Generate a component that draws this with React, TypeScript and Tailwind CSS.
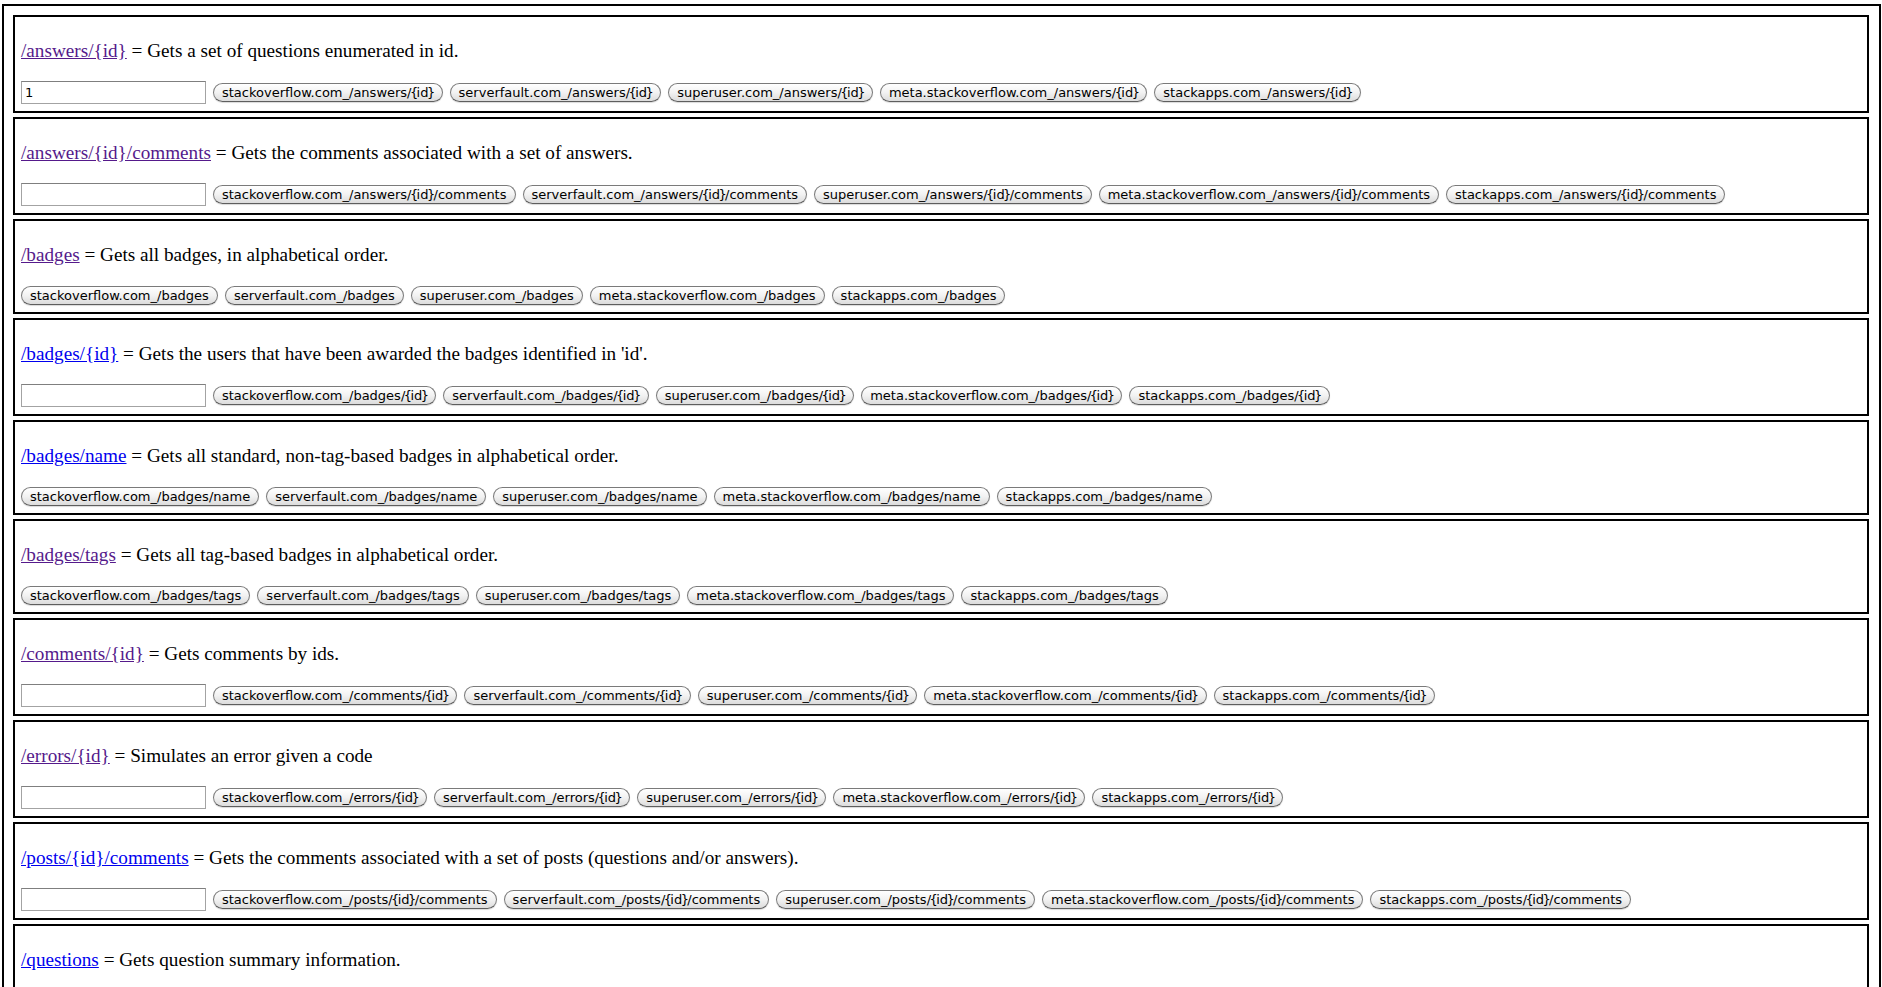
import React from "react";

type Route = { path: string; desc: string; input: boolean; value?: string; visited: boolean };

const routes: Route[] = [
  { path: "/answers/{id}", desc: "Gets a set of questions enumerated in id.", input: true, value: "1", visited: true },
  { path: "/answers/{id}/comments", desc: "Gets the comments associated with a set of answers.", input: true, visited: true },
  { path: "/badges", desc: "Gets all badges, in alphabetical order.", input: false, visited: true },
  { path: "/badges/{id}", desc: "Gets the users that have been awarded the badges identified in 'id'.", input: true, visited: false },
  { path: "/badges/name", desc: "Gets all standard, non-tag-based badges in alphabetical order.", input: false, visited: false },
  { path: "/badges/tags", desc: "Gets all tag-based badges in alphabetical order.", input: false, visited: true },
  { path: "/comments/{id}", desc: "Gets comments by ids.", input: true, visited: true },
  { path: "/errors/{id}", desc: "Simulates an error given a code", input: true, visited: true },
  { path: "/posts/{id}/comments", desc: "Gets the comments associated with a set of posts (questions and/or answers).", input: true, visited: false },
  { path: "/questions", desc: "Gets question summary information.", input: false, visited: false },
];

const sites = ["stackoverflow.com", "serverfault.com", "superuser.com", "meta.stackoverflow.com", "stackapps.com"];

function Label({ text }: { text: string }) {
  const parts = text.split(/([{}])/);
  return (
    <>
      {parts.map((p, i) =>
        p === "{" || p === "}" ? (
          <span key={i} className="mx-[-1.6px]">{p}</span>
        ) : (
          <React.Fragment key={i}>{p}</React.Fragment>
        )
      )}
    </>
  );
}

function Box({ r }: { r: Route }) {
  return (
    <div className="border-2 border-black pt-[24px] pb-[7px] pl-[6px] pr-[6px]">
      <div className="h-[20px] flex items-center whitespace-nowrap text-[19.2px] leading-[20px] text-black" style={{ fontFamily: '"Liberation Serif", "Times New Roman", serif' }}>
        <a href="#" className={r.visited ? "text-[#551a8b] underline" : "text-[#0000ee] underline"}>{r.path}</a>
        <span>&nbsp;= {r.desc}</span>
      </div>
      <div className={"mt-[20px] flex items-center gap-[7px] " + (r.input ? "h-[23px]" : "h-[20px]")} style={{ fontFamily: '"DejaVu Sans", "Lucida Grande", sans-serif' }}>
        {r.input && (
          <input
            defaultValue={r.value ?? ""}
            className="w-[185px] h-[23px] border border-[#a3a3a3] border-t-[#7f7f7f] bg-white px-[3px] text-[13px] text-black outline-none"
          />
        )}
        {sites.map((s) => (
          <button
            key={s}
            className="h-[19px] px-[8px] rounded-full border border-[#7a7a7a] border-b-[#5e5e5e] bg-gradient-to-b from-white via-[#f2f2f2] to-[#dcdcdc] text-[13px] leading-[17px] text-black whitespace-nowrap shadow-[0_1px_1px_rgba(0,0,0,0.15)]"
          >
            <Label text={s + "_" + r.path} />
          </button>
        ))}
      </div>
    </div>
  );
}

export default function App() {
  return (
    <div className="h-[987px] overflow-hidden bg-white">
      <div className="ml-[2px] mt-[4px] w-[1879px] border-2 border-black pt-[9px] pl-[9px] pr-[10px] pb-[9px] flex flex-col gap-[4px]">
        {routes.map((r) => (
          <Box key={r.path} r={r} />
        ))}
      </div>
    </div>
  );
}
